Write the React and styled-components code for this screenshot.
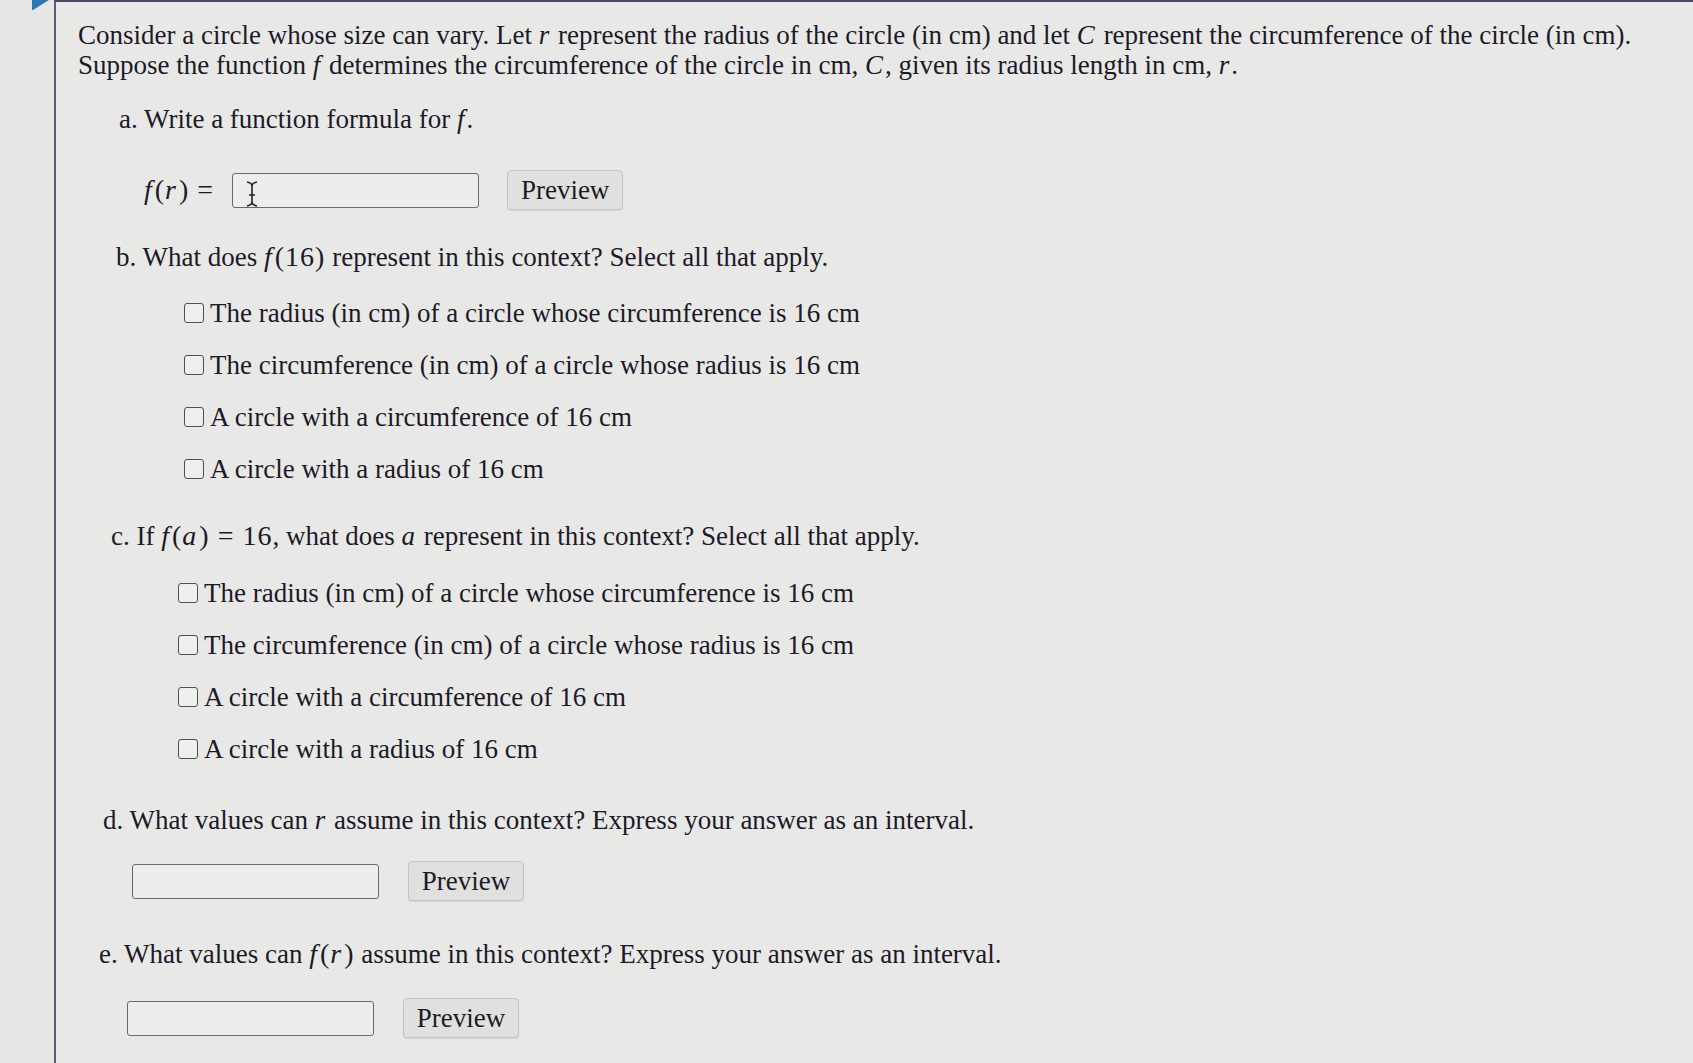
import React, { useState } from 'react';
import styled, { createGlobalStyle } from 'styled-components';

const GlobalStyle = createGlobalStyle`
  html, body {
    margin: 0;
    padding: 0;
    background: #e8e9e6;
  }
  body {
    font-family: "Liberation Serif", "Times New Roman", serif;
    color: #1c1a28;
  }
`;

const Page = styled.div`
  display: flex;
  width: 1693px;
  height: 1063px;
  overflow: hidden;
  background: #e8e9e6;
`;

const Gutter = styled.div`
  width: 54px;
  flex: none;
  background: #e6e7e4;
  display: flex;
  justify-content: flex-start;
  padding-left: 32px;
  box-sizing: border-box;
`;

const Panel = styled.div`
  flex: 1;
  border-left: 2px solid #5d5c7a;
  border-top: 2px solid #4a4866;
  padding: 18px 0 0 0;
  font-size: 27px;
  line-height: 30px;
`;

const Intro = styled.p`
  margin: 0;
  padding-left: 22px;
  padding-right: 10px;
  white-space: nowrap;
`;

const Part = styled.div`
  margin-top: ${(p) => p.$top}px;
  padding-left: ${(p) => p.$indent}px;
`;

const Question = styled.div`
  height: 30px;
  white-space: nowrap;
`;

const Var = styled.i`
  font-style: italic;
  padding-right: 2px;
`;

const MathText = styled.span`
  font-size: 28px;
  letter-spacing: 1px;
`;

const Eq = styled.span`
  padding: 0 8px;
`;

const AnswerRow = styled.div`
  display: flex;
  align-items: center;
  margin-top: ${(p) => p.$top}px;
  padding-left: ${(p) => p.$indent}px;
`;

const Label = styled.span`
  margin-right: 10px;
  white-space: nowrap;
`;

const InputWrap = styled.div`
  position: relative;
  width: 247px;
  height: 35px;
`;

const TextInput = styled.input`
  width: 100%;
  height: 100%;
  box-sizing: border-box;
  border: 1.5px solid #6a6a6e;
  border-radius: 3px;
  background: #eceeeb;
  outline: none;
  font: inherit;
  padding: 0 8px;
`;

const Cursor = styled.svg`
  position: absolute;
  left: 14px;
  top: 8px;
  pointer-events: none;
`;

const PreviewButton = styled.button`
  width: 116px;
  height: 40px;
  margin-left: ${(p) => p.$gap}px;
  border: 1px solid #c4c5c3;
  border-radius: 4px;
  background: #e0e1de;
  font-family: "Liberation Serif", "Times New Roman", serif;
  font-size: 27px;
  color: #1c1a28;
  padding: 0;
  box-shadow: 0 1px 1px rgba(0, 0, 0, 0.08);
`;

const Options = styled.div`
  display: flex;
  flex-direction: column;
  gap: 22px;
  margin-top: ${(p) => p.$top}px;
  padding-left: ${(p) => p.$indent}px;
`;

const Option = styled.label`
  display: flex;
  align-items: center;
  height: 30px;
  white-space: nowrap;
`;

const Box = styled.input`
  appearance: none;
  width: 20px;
  height: 20px;
  margin: 0 6px 0 0;
  border: 1.5px solid #4f4f5a;
  border-radius: 3px;
  background: #eef0ed;
  flex: none;
  &:checked {
    background: #2b6fb0;
  }
`;

const Triangle = () => (
  <svg width="18" height="10" viewBox="0 0 18 10">
    <polygon points="0,0 17,0 1,10 0,10" fill="#2a78ad" />
  </svg>
);

const IBeam = () => (
  <Cursor width="12" height="26" viewBox="0 0 12 26">
    <path d="M1 1 Q6 2 6 5 Q6 2 11 1 M6 5 V21 M1 25 Q6 24 6 21 Q6 24 11 25 M3 14 H9" stroke="#222" strokeWidth="1.6" fill="none" />
  </Cursor>
);

const CheckList = ({ top, indent, items }) => {
  const [checked, setChecked] = useState(items.map(() => false));
  return (
    <Options $top={top} $indent={indent}>
      {items.map((t, i) => (
        <Option key={i}>
          <Box
            type="checkbox"
            checked={checked[i]}
            onChange={() => setChecked(checked.map((c, j) => (j === i ? !c : c)))}
          />
          {t}
        </Option>
      ))}
    </Options>
  );
};

const choices = [
  'The radius (in cm) of a circle whose circumference is 16 cm',
  'The circumference (in cm) of a circle whose radius is 16 cm',
  'A circle with a circumference of 16 cm',
  'A circle with a radius of 16 cm',
];

const App = () => {
  return (
    <>
      <GlobalStyle />
      <Page>
        <Gutter>
          <Triangle />
        </Gutter>
        <Panel>
          <Intro>
            Consider a circle whose size can vary. Let <Var>r</Var> represent the radius of the circle (in cm) and let{' '}
            <Var>C</Var> represent the circumference of the circle (in cm).
            <br />
            Suppose the function <Var>f</Var> determines the circumference of the circle in cm, <Var>C</Var>, given its
            radius length in cm, <Var>r</Var>.
          </Intro>

          <Part $top={24} $indent={63}>
            <Question>
              a. Write a function formula for <Var>f</Var>.
            </Question>
          </Part>
          <AnswerRow $top={36} $indent={88}>
            <Label>
              <MathText>
                <Var>f</Var>(<Var>r</Var>)<Eq>=</Eq>
              </MathText>
            </Label>
            <InputWrap>
              <TextInput type="text" />
              <IBeam />
            </InputWrap>
            <PreviewButton $gap={28}>Preview</PreviewButton>
          </AnswerRow>

          <Part $top={32} $indent={60}>
            <Question>
              b. What does{' '}
              <MathText>
                <Var>f</Var>(16)
              </MathText>{' '}
              represent in this context? Select all that apply.
            </Question>
          </Part>
          <CheckList top={26} indent={128} items={choices} />

          <Part $top={37} $indent={55}>
            <Question>
              c. If{' '}
              <MathText>
                <Var>f</Var>(<Var>a</Var>)<Eq>=</Eq>16
              </MathText>
              , what does <Var>a</Var> represent in this context? Select all that apply.
            </Question>
          </Part>
          <CheckList top={27} indent={122} items={choices} />

          <Part $top={41} $indent={47}>
            <Question>
              d. What values can <Var>r</Var> assume in this context? Express your answer as an interval.
            </Question>
          </Part>
          <AnswerRow $top={26} $indent={76}>
            <InputWrap>
              <TextInput type="text" />
            </InputWrap>
            <PreviewButton $gap={29}>Preview</PreviewButton>
          </AnswerRow>

          <Part $top={38} $indent={43}>
            <Question>
              e. What values can{' '}
              <MathText>
                <Var>f</Var>(<Var>r</Var>)
              </MathText>{' '}
              assume in this context? Express your answer as an interval.
            </Question>
          </Part>
          <AnswerRow $top={29} $indent={71}>
            <InputWrap>
              <TextInput type="text" />
            </InputWrap>
            <PreviewButton $gap={29}>Preview</PreviewButton>
          </AnswerRow>
        </Panel>
      </Page>
    </>
  );
};

export default App;
